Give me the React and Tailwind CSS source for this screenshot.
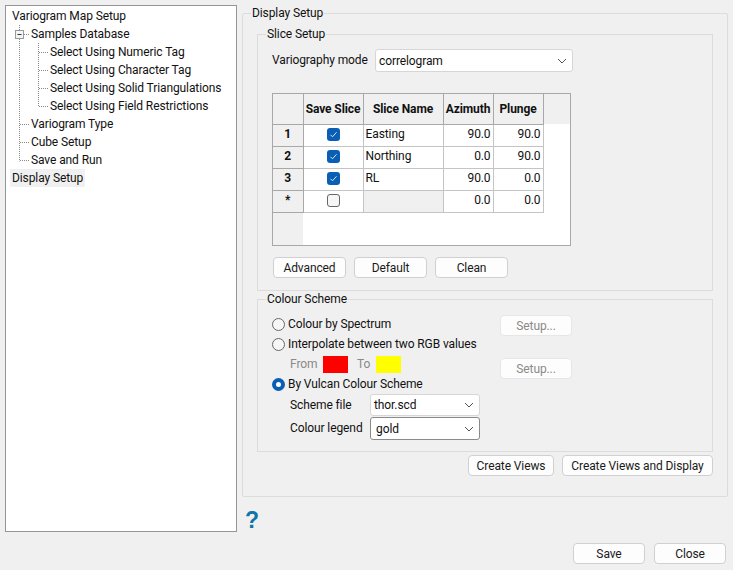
import React from "react";

const treeItems = [
  { label: "Variogram Map Setup", indent: "pl-[6px]" },
  { label: "Samples Database", indent: "pl-[25px]" },
  { label: "Select Using Numeric Tag", indent: "pl-[44px]" },
  { label: "Select Using Character Tag", indent: "pl-[44px]" },
  { label: "Select Using Solid Triangulations", indent: "pl-[44px]" },
  { label: "Select Using Field Restrictions", indent: "pl-[44px]" },
  { label: "Variogram Type", indent: "pl-[25px]" },
  { label: "Cube Setup", indent: "pl-[25px]" },
  { label: "Save and Run", indent: "pl-[25px]" },
];

const slices = [
  { id: "1", on: true, name: "Easting", az: "90.0", pl: "90.0" },
  { id: "2", on: true, name: "Northing", az: "0.0", pl: "90.0" },
  { id: "3", on: true, name: "RL", az: "90.0", pl: "0.0" },
  { id: "*", on: false, name: "", az: "0.0", pl: "0.0" },
];

const TreeLines = () => (
  <svg className="absolute left-0 top-0" width="230" height="180" fill="none" stroke="#8a8a8a" strokeDasharray="1 1">
    <path d="M13.5 19V24M13.5 33V155.5M18 28.5H23M32.5 37V100.5M33 46.5H42M33 64.5H42M33 82.5H42M33 100.5H42M14 118.5H23M14 136.5H23M14 154.5H23" />
    <rect x="9.5" y="24.5" width="8" height="8" fill="#f4f4f4" stroke="#9a9a9a" strokeDasharray="none" />
    <path d="M11.5 28.5H15.5" stroke="#333" strokeDasharray="none" />
  </svg>
);

const Button = ({ className = "", children }) => (
  <button className={`h-[21px] rounded-[4px] border border-[#d0d0d0] bg-[#fdfdfd] text-[12px] leading-none text-[#1a1a1a] ${className}`}>
    {children}
  </button>
);

const Chevron = () => (
  <svg width="10" height="6" viewBox="0 0 10 6" fill="none" stroke="#555" strokeWidth="1">
    <path d="M1 1l4 4 4-4" />
  </svg>
);

const Select = ({ value, className = "" }) => (
  <div className={`flex items-center justify-between rounded-[3px] bg-white pl-[3px] pr-[5px] text-[12px] ${className}`}>
    <span>{value}</span>
    <Chevron />
  </div>
);

const Radio = ({ checked, label }) => (
  <div className="flex h-5 items-center whitespace-nowrap">
    {checked ? (
      <span className="h-[13px] w-[13px] rounded-full border-[4px] border-[#0a5fb4] bg-white" />
    ) : (
      <span className="h-[13px] w-[13px] rounded-full border border-[#666] bg-[#f6f6f6]" />
    )}
    <span className="ml-[3px]">{label}</span>
  </div>
);

const CheckBox = ({ on }) =>
  on ? (
    <span className="mx-auto flex h-[13px] w-[13px] items-center justify-center rounded-[3px] bg-[#0a5fb4]">
      <svg width="9" height="9" viewBox="0 0 9 9" fill="none" stroke="#d5e6f7" strokeWidth="1">
        <path d="M1.5 4.8l2 2 4-4.5" />
      </svg>
    </span>
  ) : (
    <span className="mx-auto block h-[13px] w-[13px] rounded-[3px] border border-[#666] bg-[#f6f6f6]" />
  );

const headCell = "border-r border-b border-[#a8a8a8] bg-[#f0f0f0] p-0 text-center font-bold text-[12px]";
const cell = "border-r border-b border-[#c4c4c4] p-0 pb-[2px] h-[22px]";

export default function App() {
  return (
    <div
      className="flex h-[570px] w-[733px] flex-col overflow-hidden bg-[#f0f0f0] text-[12px] tracking-[-0.1px] text-[#111]"
      style={{ fontFamily: 'Roboto, "Noto Sans", sans-serif' }}
    >
      <div className="flex flex-1 pl-[5px] pt-[5px]">
        {/* Tree */}
        <div className="relative h-[527px] w-[232px] shrink-0 border border-[#969696] bg-white">
          <TreeLines />
          <div className="relative flex flex-col pt-[1px]">
            {treeItems.map((item) => (
              <div key={item.label} className={`flex h-[18px] items-center whitespace-nowrap ${item.indent}`}>
                {item.label}
              </div>
            ))}
            <div className="ml-[4px] flex h-[18px] w-[75px] items-center whitespace-nowrap bg-[#f0f0f0] pl-[2px]">Display Setup</div>
          </div>
        </div>

        {/* Right side */}
        <div className="ml-[5px] flex flex-col">
          <fieldset className="h-[492px] w-[485px] rounded-[2px] border border-[#dcdcdc] px-[14px]">
            <legend className="-ml-[6px] px-[1px] leading-[16px]">Display Setup</legend>

            <fieldset className="mt-[5px] h-[265px] w-[456px] border border-[#dcdcdc] pl-[14px]">
              <legend className="-ml-[6px] px-[1px] leading-[16px]">Slice Setup</legend>

              <div className="mt-[7px] flex items-center whitespace-nowrap">
                <span className="w-[103px] pb-[2px]">Variography mode</span>
                <Select value="correlogram" className="h-[23px] w-[198px] border border-[#d6d6d6]" />
              </div>

              <div className="mt-[21px] h-[153px] w-[299px] border border-[#a8a8a8] bg-white">
                <div className="flex h-full">
                  <div className="h-full w-[30px] bg-[#f0f0f0]" />
                  <div className="flex-1" />
                </div>
                <table className="relative -mt-[151px] table-fixed border-collapse">
                  <thead>
                    <tr className="h-[30px]">
                      <th className={`${headCell} w-[30px]`} />
                      <th className={`${headCell} w-[60px]`}>Save Slice</th>
                      <th className={`${headCell} w-[80px]`}>Slice Name</th>
                      <th className={`${headCell} w-[50px]`}>Azimuth</th>
                      <th className={`${headCell} w-[50px]`}>Plunge</th>
                      <th className="w-[27px] border-b border-transparent bg-[#f0f0f0] p-0" />
                    </tr>
                  </thead>
                  <tbody>
                    {slices.map((s) => (
                      <tr key={s.id}>
                        <td className={`${cell} border-r-[#a8a8a8] border-b-[#a8a8a8] bg-[#f0f0f0] text-center font-bold`}>{s.id}</td>
                        <td className={cell}>
                          <CheckBox on={s.on} />
                        </td>
                        <td className={`${cell} px-[2px] ${s.id === "*" ? "bg-[#f0f0f0]" : ""}`}>{s.name}</td>
                        <td className={`${cell} pr-[2px] text-right`}>{s.az}</td>
                        <td className={`${cell} pr-[2px] text-right`}>{s.pl}</td>
                      </tr>
                    ))}
                  </tbody>
                </table>
              </div>

              <div className="mt-[11px] flex gap-[8px] pl-[1px]">
                <Button className="w-[73px]">Advanced</Button>
                <Button className="w-[73px]">Default</Button>
                <Button className="w-[73px]">Clean</Button>
              </div>
            </fieldset>

            <fieldset className="h-[161px] w-[456px] border border-[#dcdcdc] pl-[14px]">
              <legend className="-ml-[6px] px-[1px] leading-[16px]">Colour Scheme</legend>

              <div className="mt-[7px] flex">
                <div className="flex w-[228px] flex-col">
                  <Radio label="Colour by Spectrum" />
                  <Radio label="Interpolate between two RGB values" />
                  <div className="flex h-[20px] items-center pl-[18px] text-[#8a8a8a]">
                    <span className="w-[33px]">From</span>
                    <span className="h-[17px] w-[25px] bg-[#ff0000]" />
                    <span className="ml-[9px] w-[19px]">To</span>
                    <span className="h-[17px] w-[25px] bg-[#ffff00]" />
                  </div>
                  <Radio checked label="By Vulcan Colour Scheme" />
                  <div className="flex h-[22px] items-center pl-[18px]">
                    <span className="w-[80px]">Scheme file</span>
                    <Select value="thor.scd" className="h-[22px] w-[110px] border border-[#d6d6d6]" />
                  </div>
                  <div className="mt-[1px] flex h-[23px] items-center pl-[18px]">
                    <span className="w-[80px] whitespace-nowrap pb-[1px]">Colour legend</span>
                    <Select value="gold" className="h-[23px] w-[110px] border border-[#8a8a8a] pl-[5px]" />
                  </div>
                </div>
                <div className="flex flex-col gap-[22px] pt-[1px]">
                  <Button className="w-[72px] border-[#e6e6e6] bg-[#f6f6f6] text-[#8a8a8a]">Setup...</Button>
                  <Button className="w-[72px] border-[#e6e6e6] bg-[#f6f6f6] text-[#8a8a8a]">Setup...</Button>
                </div>
              </div>
            </fieldset>

            <div className="mt-[3px] flex w-[456px] justify-end gap-[8px]">
              <Button className="w-[86px]">Create Views</Button>
              <Button className="w-[151px]">Create Views and Display</Button>
            </div>
          </fieldset>

          <div
            className="ml-[3px] mt-[10px] text-[23px] font-bold leading-[26px] text-[#0f75a8]"
            style={{ fontFamily: '"Liberation Sans", sans-serif' }}
          >
            ?
          </div>
        </div>
      </div>

      <div className="flex justify-end gap-[9px] pb-[6px] pr-[7px]">
        <Button className="w-[72px]">Save</Button>
        <Button className="w-[72px]">Close</Button>
      </div>
    </div>
  );
}
